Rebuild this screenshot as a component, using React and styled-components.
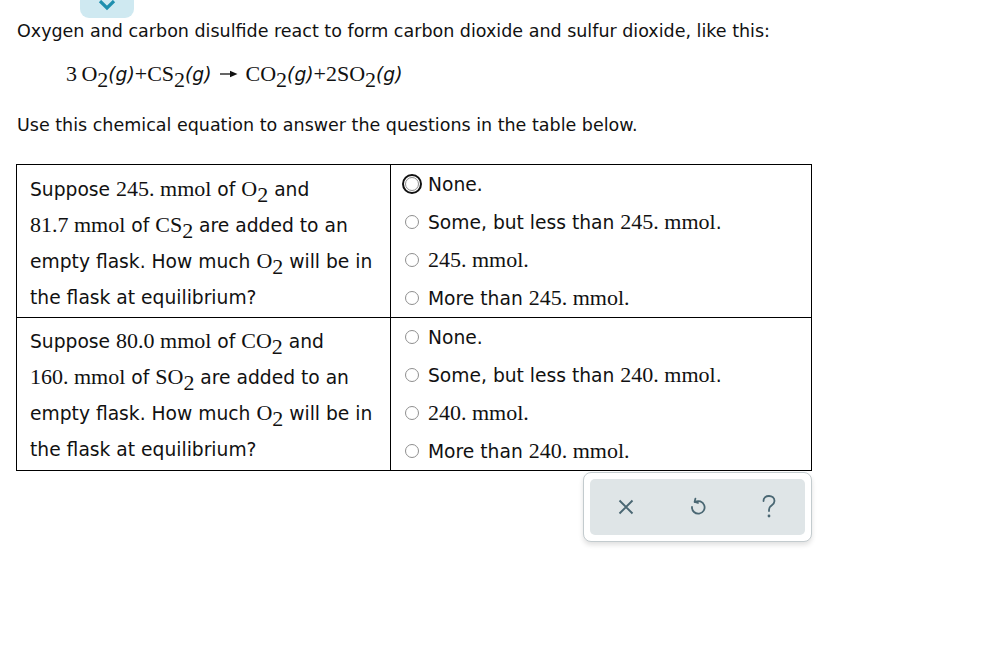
import React from "react";
import styled, { createGlobalStyle } from "styled-components";

const Global = createGlobalStyle`
  html, body { margin: 0; padding: 0; background: #fff; }
  body {
    font-family: "DejaVu Sans", Verdana, sans-serif;
    font-size: 17.5px;
    color: #111;
  }
`;

const Page = styled.div`
  width: 1007px;
  height: 650px;
  padding-left: 16px;
  box-sizing: border-box;
`;

const Tab = styled.div`
  margin-left: 64px;
  width: 54px;
  height: 18px;
  background: #cfe9f1;
  border-radius: 0 0 9px 9px;
  display: flex;
  justify-content: center;
  align-items: flex-start;
`;

const Para = styled.p`
  margin: 0;
  padding-left: 1px;
  line-height: 26px;
  padding-top: ${(p) => p.$top || 0}px;
  white-space: nowrap;
`;

const Equation = styled.div`
  margin-top: 18px;
  padding-left: 50px;
  line-height: 26px;
  white-space: nowrap;
  font-size: 18.7px;
`;

const Serif = styled.span`
  font-family: "Liberation Serif", "Times New Roman", serif;
  font-size: 22px;
  line-height: 1;
`;

const Sub = styled.span`
  font-family: "Liberation Serif", "Times New Roman", serif;
  font-size: 22px;
  position: relative;
  top: 6px;
  line-height: 1;
`;

const Ital = styled.span`
  font-style: italic;
`;

const Arrow = styled.svg`
  margin: 0 8px 0 8px;
  vertical-align: 3px;
`;

const Table = styled.div`
  margin-top: 26px;
  width: 796px;
  border: 1px solid #000;
  box-sizing: border-box;
  font-size: 18.7px;
`;

const Row = styled.div`
  display: grid;
  grid-template-columns: 374px 1fr;
  border-top: ${(p) => (p.$first ? "none" : "1px solid #000")};
`;

const Question = styled.div`
  border-right: 1px solid #000;
  padding: ${(p) => p.$pt}px 8px 0 13px;
  line-height: 36px;
  white-space: nowrap;
`;

const QLine = styled.div`
  height: 36px;
`;

const Options = styled.div`
  padding: 0 0 0 14px;
  white-space: nowrap;
`;

const Option = styled.label`
  display: flex;
  align-items: center;
  height: 38px;
  gap: 9px;
`;

const Radio = styled.span`
  width: 14px;
  height: 14px;
  border-radius: 50%;
  border: 1px solid #8f8f8f;
  box-sizing: border-box;
  flex: none;
  background: #fff;
  outline: ${(p) => (p.$focus ? "2px solid #111" : "none")};
  outline-offset: 1px;
`;

const ToolWrap = styled.div`
  width: 796px;
  display: flex;
  justify-content: flex-end;
  margin-top: 1px;
`;

const Tools = styled.div`
  width: 229px;
  height: 70px;
  box-sizing: border-box;
  border: 1px solid #c3cbce;
  border-radius: 8px;
  padding: 6px;
  box-shadow: 0 3px 5px rgba(0, 0, 0, 0.12);
  background: #fff;
`;

const ToolInner = styled.div`
  height: 100%;
  background: #dfe5e7;
  border-radius: 5px;
  display: flex;
`;

const ToolButton = styled.button`
  flex: 1;
  border: none;
  background: transparent;
  display: flex;
  align-items: center;
  justify-content: center;
  padding: 0;
  color: #4a6773;
  cursor: pointer;
`;

const M = ({ children }) => <Serif>{children}</Serif>;
const S = () => <Sub>2</Sub>;

const questions = [
  {
    pt: 7,
    lines: [
      <>Suppose <M>245. mmol</M> of <M>O</M><S /> and</>,
      <><M>81.7 mmol</M> of <M>CS</M><S /> are added to an</>,
      <>empty flask. How much <M>O</M><S /> will be in</>,
      <>the flask at equilibrium?</>,
    ],
    value: "245.",
  },
  {
    pt: 6,
    lines: [
      <>Suppose <M>80.0 mmol</M> of <M>CO</M><S /> and</>,
      <><M>160. mmol</M> of <M>SO</M><S /> are added to an</>,
      <>empty flask. How much <M>O</M><S /> will be in</>,
      <>the flask at equilibrium?</>,
    ],
    value: "240.",
  },
];

export default function App() {
  return (
    <Page>
      <Global />
      <Tab>
        <svg width="20" height="12" viewBox="0 0 20 12">
          <path d="M3 1 L10 8 L17 1" fill="none" stroke="#1f8fae" strokeWidth="3.2" />
        </svg>
      </Tab>
      <Para $top={0}>
        Oxygen and carbon disulfide react to form carbon dioxide and sulfur dioxide, like this:
      </Para>
      <Equation>
        <M>3&thinsp;O</M><S /><Ital>(g)</Ital><M>+CS</M><S /><Ital>(g)</Ital>
        <Arrow width="18" height="8" viewBox="0 0 18 8">
          <path d="M0 4 H12" stroke="#111" strokeWidth="1.3" />
          <path d="M10 0.8 L17.5 4 L10 7.2 Z" fill="#111" />
        </Arrow>
        <M>CO</M><S /><Ital>(g)</Ital><M>+2SO</M><S /><Ital>(g)</Ital>
      </Equation>
      <Para $top={24}>Use this chemical equation to answer the questions in the table below.</Para>
      <Table>
        {questions.map((q, i) => (
          <Row key={i} $first={i === 0}>
            <Question $pt={q.pt}>
              {q.lines.map((l, j) => (
                <QLine key={j}>{l}</QLine>
              ))}
            </Question>
            <Options>
              <Option>
                <Radio $focus={i === 0} />
                <span>None.</span>
              </Option>
              <Option>
                <Radio />
                <span>Some, but less than <M>{q.value} mmol</M>.</span>
              </Option>
              <Option>
                <Radio />
                <M>{q.value} mmol.</M>
              </Option>
              <Option>
                <Radio />
                <span>More than <M>{q.value} mmol.</M></span>
              </Option>
            </Options>
          </Row>
        ))}
      </Table>
      <ToolWrap>
        <Tools>
          <ToolInner>
            <ToolButton aria-label="clear">
              <svg width="18" height="18" viewBox="0 0 18 18">
                <path d="M2.5 2.5 L15.5 15.5 M15.5 2.5 L2.5 15.5" stroke="currentColor" strokeWidth="1.9" fill="none" />
              </svg>
            </ToolButton>
            <ToolButton aria-label="undo">
              <svg width="20" height="22" viewBox="0 0 20 22">
                <path d="M7 6 A6.3 6.3 0 1 1 4 11" stroke="currentColor" strokeWidth="1.8" fill="none" strokeLinecap="round" />
                <path d="M7.4 2.6 L6.6 6 L10 6.9" stroke="currentColor" strokeWidth="1.8" fill="none" strokeLinecap="round" strokeLinejoin="round" />
              </svg>
            </ToolButton>
            <ToolButton aria-label="help">
              <svg width="16" height="26" viewBox="0 0 16 26">
                <path d="M2.5 7 C2.5 3.6 5 2 8 2 C11 2 13.5 3.8 13.5 7 C13.5 10 11 11.1 9.2 12.6 C8.3 13.5 8 14.4 8 17" stroke="currentColor" strokeWidth="1.8" fill="none" strokeLinecap="round" />
                <circle cx="8" cy="22" r="1.4" fill="currentColor" />
              </svg>
            </ToolButton>
          </ToolInner>
        </Tools>
      </ToolWrap>
    </Page>
  );
}
